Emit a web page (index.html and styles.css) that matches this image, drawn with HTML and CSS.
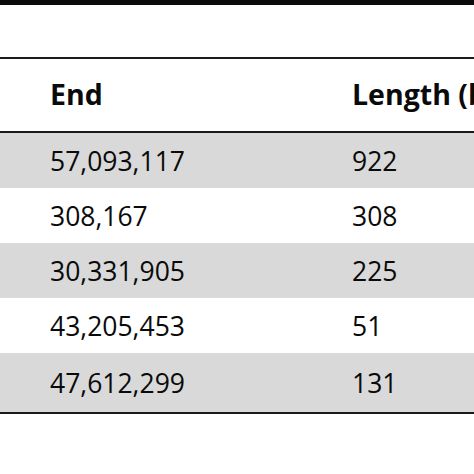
FILE: index.html
```html
<!DOCTYPE html>
<html lang="en">
<head>
<meta charset="utf-8">
<title>Table</title>
<link rel="stylesheet" href="styles.css">
</head>
<body>
<div class="page">
  <div class="top-rule"></div>
  <div class="caption-space"></div>
  <div class="table">
    <div class="row head">
      <div class="cell c1">End</div>
      <div class="cell c2">Length (bp)</div>
    </div>
    <div class="row shade">
      <div class="cell c1">57,093,117</div>
      <div class="cell c2">922</div>
    </div>
    <div class="row">
      <div class="cell c1">308,167</div>
      <div class="cell c2">308</div>
    </div>
    <div class="row shade">
      <div class="cell c1">30,331,905</div>
      <div class="cell c2">225</div>
    </div>
    <div class="row">
      <div class="cell c1">43,205,453</div>
      <div class="cell c2">51</div>
    </div>
    <div class="row shade last">
      <div class="cell c1">47,612,299</div>
      <div class="cell c2">131</div>
    </div>
  </div>
</div>
</body>
</html>
```
FILE: styles.css
```css
html, body {
  margin: 0;
  padding: 0;
  background: #fff;
  overflow: hidden;
}
.page {
  width: 474px;
  height: 474px;
  overflow: hidden;
  font-family: "Open Sans", "Noto Sans", sans-serif;
  font-size: 26.5px;
  color: #0a0a0a;
}
.top-rule {
  height: 5px;
  background: #0a0a0a;
}
.caption-space {
  height: 52px;
}
.table {
  border-top: 2px solid #1a1a1a;
  border-bottom: 2px solid #1a1a1a;
  width: 600px;
}
.row {
  display: flex;
  align-items: center;
  height: 55px;
  padding-left: 50px;
  white-space: nowrap;
}
.row.head {
  font-size: 28.5px;
  font-weight: 700;
  border-bottom: 2px solid #1a1a1a;
  padding-bottom: 3px;
  box-sizing: border-box;
  height: 74px;
}
.row.shade {
  background: #d9d9d9;
}
.row.last {
  height: 59px;
}
.c1 {
  width: 302px;
  flex: none;
}
.c2 {
  flex: none;
}
```
